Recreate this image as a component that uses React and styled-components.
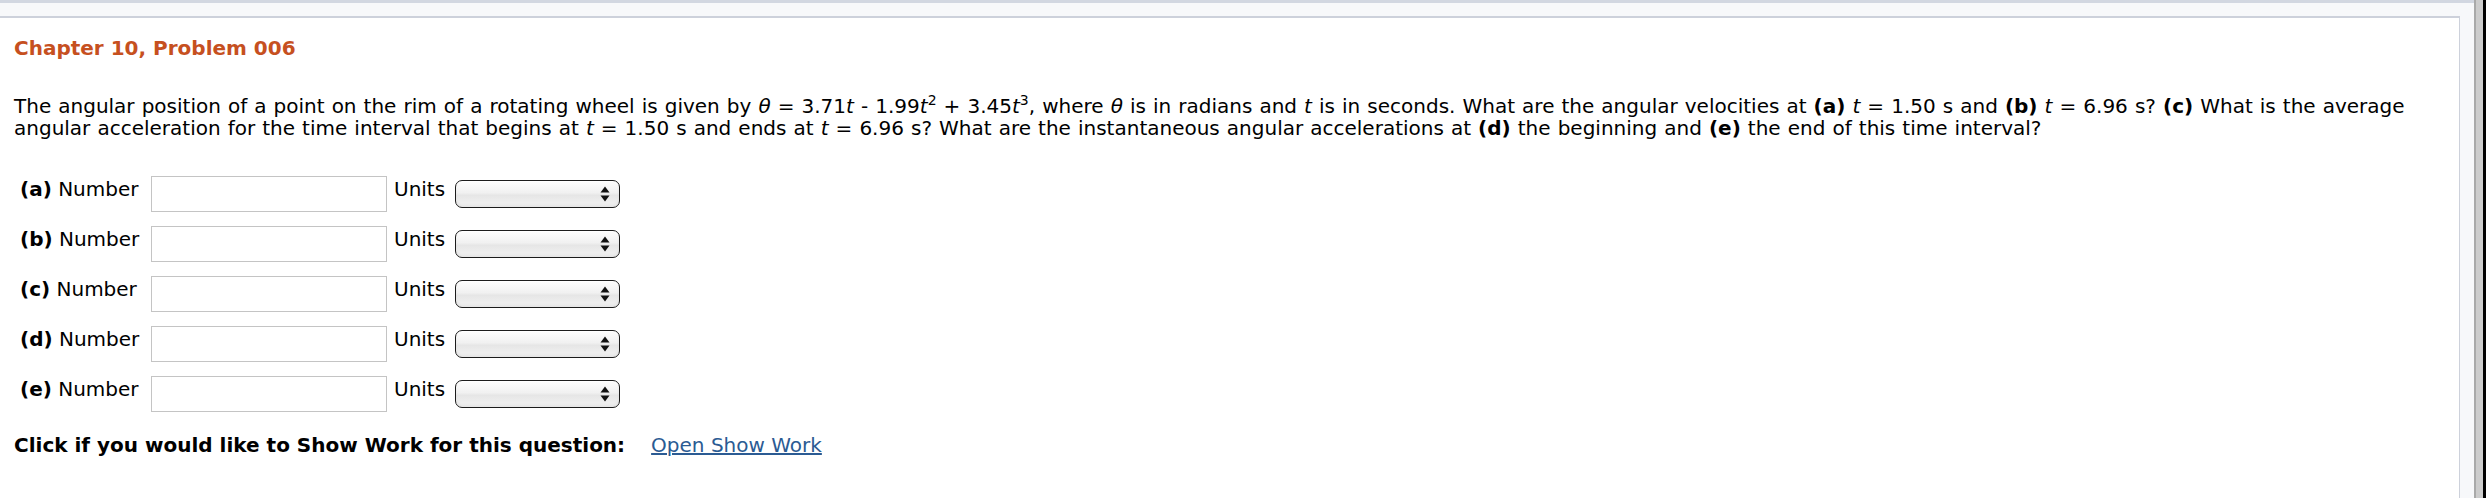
import React from "react";
import styled, { createGlobalStyle } from "styled-components";

const GlobalStyle = createGlobalStyle`
    html, body {
        margin: 0;
        padding: 0;
        background: #f7f8fa;
    }
    body {
        font-family: "DejaVu Sans", Verdana, sans-serif;
        color: #000;
    }
`;

const Page = styled.div`
    display: flex;
    height: 498px;
    overflow: hidden;
`;

const Main = styled.div`
    flex: 1;
    display: flex;
    flex-direction: column;
    border-top: 3px solid #d2d7e1;
    padding-top: 13px;
    padding-right: 14px;
`;

const Scrollbar = styled.div`
    width: 12px;
    height: 100%;
    box-sizing: border-box;
    background: #cccccc;
    border-left: 2px solid #a9a9a9;
    border-right: 3px solid #000;
`;

const Panel = styled.div`
    flex: 1;
    background: #fff;
    border-top: 2px solid #cdd1db;
    border-right: 1px solid #cdd1db;
    padding: 0 0 0 13px;
`;

const Title = styled.h2`
    margin: 18px 0 0 1px;
    font-size: 20px;
    line-height: 24px;
    font-weight: bold;
    color: #c6501f;
`;

const Question = styled.p`
    margin: 35px 0 0 1px;
    font-size: 20px;
    line-height: 22px;
    word-spacing: 0.7px;

    sup {
        font-size: 14px;
        line-height: 0;
        vertical-align: 8px;
    }
`;

const Answers = styled.div`
    display: flex;
    flex-direction: column;
    gap: 14px;
    margin-top: 37px;
`;

const Row = styled.div`
    display: flex;
    align-items: flex-start;
    padding-left: 7px;
    height: 36px;
`;

const Label = styled.span`
    width: 131px;
    flex: none;
    font-size: 20px;
    line-height: 26px;
`;

const UnitsLabel = styled(Label)`
    width: 61px;
    padding-left: 7px;
`;

const NumberInput = styled.input`
    box-sizing: border-box;
    width: 236px;
    height: 36px;
    margin: 0;
    border: 1px solid #c4c4c4;
    background: #fff;
    outline: none;
    font: inherit;
    font-size: 18px;
`;

const SelectWrap = styled.div`
    position: relative;
    margin-top: 4px;
`;

const Select = styled.select`
    appearance: none;
    box-sizing: border-box;
    width: 165px;
    height: 28px;
    margin: 0;
    border: 1.5px solid #1c1c1c;
    border-radius: 7px;
    background: linear-gradient(#fdfdfd 0%, #f1f1f1 45%, #e6e6e6 55%, #f3f3f3 100%);
    box-shadow: inset 0 1px 1px rgba(255, 255, 255, 0.9), inset 0 -2px 3px rgba(0, 0, 0, 0.06);
    font: inherit;
    font-size: 15px;
`;

const Arrows = styled.svg`
    position: absolute;
    right: 10px;
    top: 6px;
    pointer-events: none;
`;

const Footer = styled.div`
    display: flex;
    margin-top: 22px;
    margin-left: 1px;
    font-size: 20px;
    line-height: 22px;
`;

const Prompt = styled.b`
    margin-right: 26px;
`;

const ShowWork = styled.a`
    color: #2b5b93;
    text-decoration: underline;
    cursor: pointer;
`;

const parts = ["a", "b", "c", "d", "e"];

function UnitSelect() {
    return (
        <SelectWrap>
            <Select defaultValue="">
                <option value=""></option>
            </Select>
            <Arrows width="10" height="16" viewBox="0 0 10 16">
                <path d="M5 0.5 L9.5 6.5 L0.5 6.5 Z" fill="#111" />
                <path d="M0.5 9.5 L9.5 9.5 L5 15.5 Z" fill="#111" />
            </Arrows>
        </SelectWrap>
    );
}

export default function App() {
    return (
        <Page>
            <GlobalStyle />
            <Main>
                <Panel>
                    <Title>Chapter 10, Problem 006</Title>
                    <Question>
                        The angular position of a point on the rim of a rotating wheel is given by <i>θ</i> = 3.71<i>t</i> - 1.99<i>t</i>
                        <sup>2</sup> + 3.45<i>t</i><sup>3</sup>, where <i>θ</i> is in radians and <i>t</i> is in seconds. What are the
                        angular velocities at <b>(a)</b> <i>t</i> = 1.50 s and <b>(b)</b> <i>t</i> = 6.96 s? <b>(c)</b> What is the average
                        angular acceleration for the time interval that begins at <i>t</i> = 1.50 s and ends at <i>t</i> = 6.96 s? What are
                        the instantaneous angular accelerations at <b>(d)</b> the beginning and <b>(e)</b> the end of this time interval?
                    </Question>
                    <Answers>
                        {parts.map((p) => (
                            <Row key={p}>
                                <Label>
                                    <b>({p})</b> Number
                                </Label>
                                <NumberInput type="text" />
                                <UnitsLabel>Units</UnitsLabel>
                                <UnitSelect />
                            </Row>
                        ))}
                    </Answers>
                    <Footer>
                        <Prompt>Click if you would like to Show Work for this question:</Prompt>
                        <ShowWork>Open Show Work</ShowWork>
                    </Footer>
                </Panel>
            </Main>
            <Scrollbar />
        </Page>
    );
}
